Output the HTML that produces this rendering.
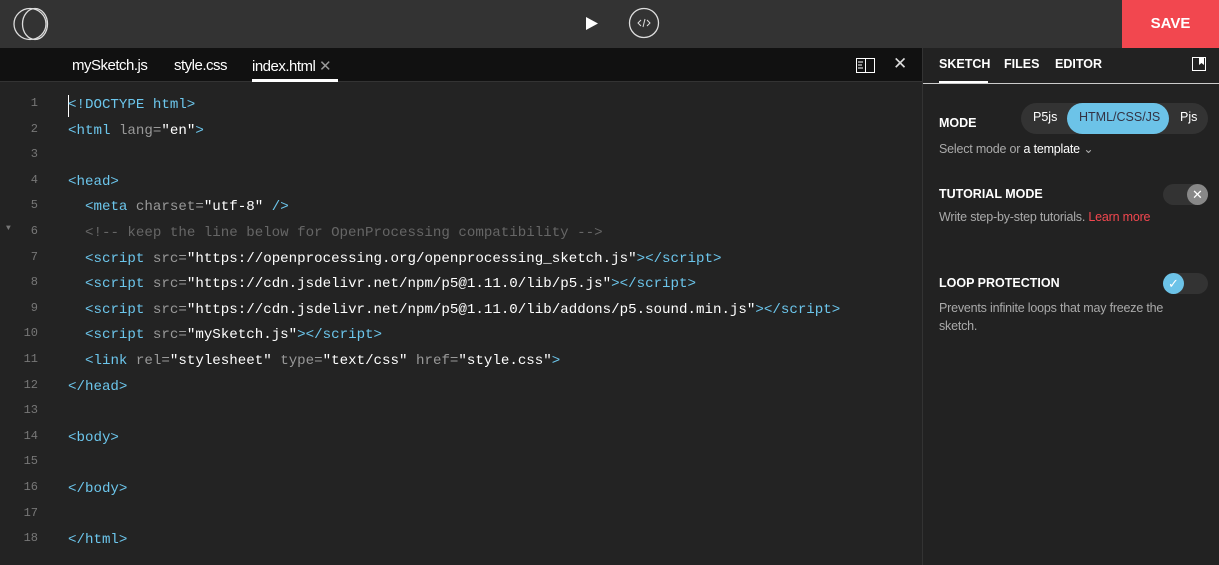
<!DOCTYPE html>
<html><head><style>
*{margin:0;padding:0;box-sizing:border-box}
body{width:1219px;height:565px;background:#232323;font-family:"Liberation Sans",sans-serif;overflow:hidden;position:relative}
.top{position:absolute;left:0;top:0;width:1219px;height:48px;background:#333}
.save{position:absolute;right:0;top:0;width:97px;height:48px;background:#f2474f;color:#fff;font-weight:bold;font-size:15px;text-align:center;line-height:48px}
.tabs{position:absolute;left:0;top:48px;width:922px;height:34px;background:#111;border-bottom:1px solid #333}
.tab{position:absolute;top:9px;color:#fff;font-size:15px;letter-spacing:-0.5px}
.editor{position:absolute;left:0;top:83px;width:922px;height:482px;background:#232323}
.ln{position:absolute;left:0;width:38px;text-align:right;color:#777;font-family:"Liberation Mono",monospace;font-size:12px}
.code{position:absolute;left:68px;font-family:"Liberation Mono",monospace;font-size:14.15px;color:#fff;white-space:pre}
.t{color:#6cc6ec}.a{color:#999}.c{color:#666}
.panel{position:absolute;left:922px;top:48px;width:297px;height:517px;background:#222;border-left:1px solid #333}
.ptab{position:absolute;top:9px;color:#fff;font-weight:bold;font-size:12.5px}
.h{position:absolute;left:16px;color:#fff;font-weight:bold;font-size:12.5px}
.d{position:absolute;left:16px;color:#aaa;font-size:12.5px;letter-spacing:-0.2px}
</style></head><body>
<div class="top">
<svg style="position:absolute;left:12px;top:7px" width="38" height="34"><ellipse cx="18" cy="17" rx="16" ry="15.5" fill="none" stroke="#ddd" stroke-width="1.3"/><ellipse cx="23" cy="17" rx="12.5" ry="15.5" fill="none" stroke="#ddd" stroke-width="1.3"/></svg>
<svg style="position:absolute;left:586px;top:17px" width="13" height="13"><path d="M0 0L12 6.5L0 13Z" fill="#fff"/></svg>
<svg style="position:absolute;left:628px;top:7px" width="32" height="32"><circle cx="16" cy="16" r="14.5" fill="none" stroke="#ddd" stroke-width="1.3"/><path d="M13 13L10 16L13 19M19 13L22 16L19 19M17 12L15 20" fill="none" stroke="#ddd" stroke-width="1"/></svg>
<div class="save">SAVE</div>
</div>
<div class="tabs">
<div class="tab" style="left:72px">mySketch.js</div>
<div class="tab" style="left:174px">style.css</div>
<div class="tab" style="left:252px">index.html <span style="color:#999">✕</span></div>
<div style="position:absolute;left:252px;top:31px;width:86px;height:3px;background:#fff"></div>
<svg style="position:absolute;left:856px;top:10px" width="19" height="15"><rect x="0.5" y="0.5" width="18" height="14" fill="none" stroke="#fff"/><path d="M9.5 0V15M2 4H7M2 7H6M2 10H7" stroke="#fff"/></svg>
<div style="position:absolute;left:893px;top:6px;color:#ddd;font-size:17px">✕</div>
</div>
<div class="editor">
<div style="position:absolute;left:68px;top:12px;width:1px;height:22px;background:#fff"></div>
</div>
<div id="lines"></div>
<div class="panel">
<div class="ptab" style="left:16px">SKETCH</div>
<div style="position:absolute;left:16px;top:33px;width:49px;height:2px;background:#fff"></div>
<div class="ptab" style="left:81px">FILES</div>
<div class="ptab" style="left:132px">EDITOR</div>
<div style="position:absolute;left:0;top:35px;width:297px;height:1px;background:#ccc"></div>
<svg style="position:absolute;left:269px;top:9px" width="15" height="15"><rect x="0.5" y="0.5" width="13" height="13" fill="none" stroke="#fff"/><path d="M7 1H12V8L9.5 6L7 8Z" fill="#fff"/></svg>
<div class="h" style="top:68px">MODE</div>
<div style="position:absolute;left:98px;top:55px;width:187px;height:31px;border-radius:16px;background:#333"></div>
<div style="position:absolute;left:144px;top:55px;width:102px;height:31px;border-radius:16px;background:#6cc3e8"></div>
<div style="position:absolute;left:110px;top:62px;color:#fff;font-size:12.5px">P5js</div>
<div style="position:absolute;left:156px;top:62px;color:#334;font-size:12.5px">HTML/CSS/JS</div>
<div style="position:absolute;left:257px;top:62px;color:#fff;font-size:12.5px">Pjs</div>
<div class="d" style="top:93px">Select mode or <span style="color:#fff">a template</span> ⌄</div>
<div class="h" style="top:139px">TUTORIAL MODE</div>
<div style="position:absolute;left:240px;top:136px;width:45px;height:21px;border-radius:11px;background:#333"></div>
<div style="position:absolute;left:264px;top:136px;width:21px;height:21px;border-radius:11px;background:#888;color:#fff;font-size:13px;text-align:center;line-height:21px">✕</div>
<div class="d" style="top:162px">Write step-by-step tutorials. <span style="color:#f2474f">Learn more</span></div>
<div class="h" style="top:228px">LOOP PROTECTION</div>
<div style="position:absolute;left:240px;top:225px;width:45px;height:21px;border-radius:11px;background:#333"></div>
<div style="position:absolute;left:240px;top:225px;width:21px;height:21px;border-radius:11px;background:#6cc3e8;color:#fff;font-size:13px;text-align:center;line-height:21px">✓</div>
<div class="d" style="top:251px;width:260px;line-height:18px">Prevents infinite loops that may freeze the sketch.</div>
</div>
<script>
var L=[
'<span class="t">&lt;!DOCTYPE html&gt;</span>',
'<span class="t">&lt;html</span> <span class="a">lang=</span>"en"<span class="t">&gt;</span>',
'',
'<span class="t">&lt;head&gt;</span>',
'  <span class="t">&lt;meta</span> <span class="a">charset=</span>"utf-8" <span class="t">/&gt;</span>',
'  <span class="c">&lt;!-- keep the line below for OpenProcessing compatibility --&gt;</span>',
'  <span class="t">&lt;script</span> <span class="a">src=</span>"https://openprocessing.org/openprocessing_sketch.js"<span class="t">&gt;&lt;/script&gt;</span>',
'  <span class="t">&lt;script</span> <span class="a">src=</span>"https://cdn.jsdelivr.net/npm/p5@1.11.0/lib/p5.js"<span class="t">&gt;&lt;/script&gt;</span>',
'  <span class="t">&lt;script</span> <span class="a">src=</span>"https://cdn.jsdelivr.net/npm/p5@1.11.0/lib/addons/p5.sound.min.js"<span class="t">&gt;&lt;/script&gt;</span>',
'  <span class="t">&lt;script</span> <span class="a">src=</span>"mySketch.js"<span class="t">&gt;&lt;/script&gt;</span>',
'  <span class="t">&lt;link</span> <span class="a">rel=</span>"stylesheet" <span class="a">type=</span>"text/css" <span class="a">href=</span>"style.css"<span class="t">&gt;</span>',
'<span class="t">&lt;/head&gt;</span>','','<span class="t">&lt;body&gt;</span>','','<span class="t">&lt;/body&gt;</span>','','<span class="t">&lt;/html&gt;</span>'];
var h='';
for(var i=0;i<L.length;i++){var y=94+i*25.6;
h+='<div class="ln" style="top:'+(y+2)+'px">'+(i==5?'<span style="font-size:8px;position:absolute;left:6px">▼</span>':'')+(i+1)+'</div><div class="code" style="top:'+(y+3)+'px">'+L[i]+'</div>';}
document.getElementById('lines').innerHTML=h;
</script>
</body></html>
